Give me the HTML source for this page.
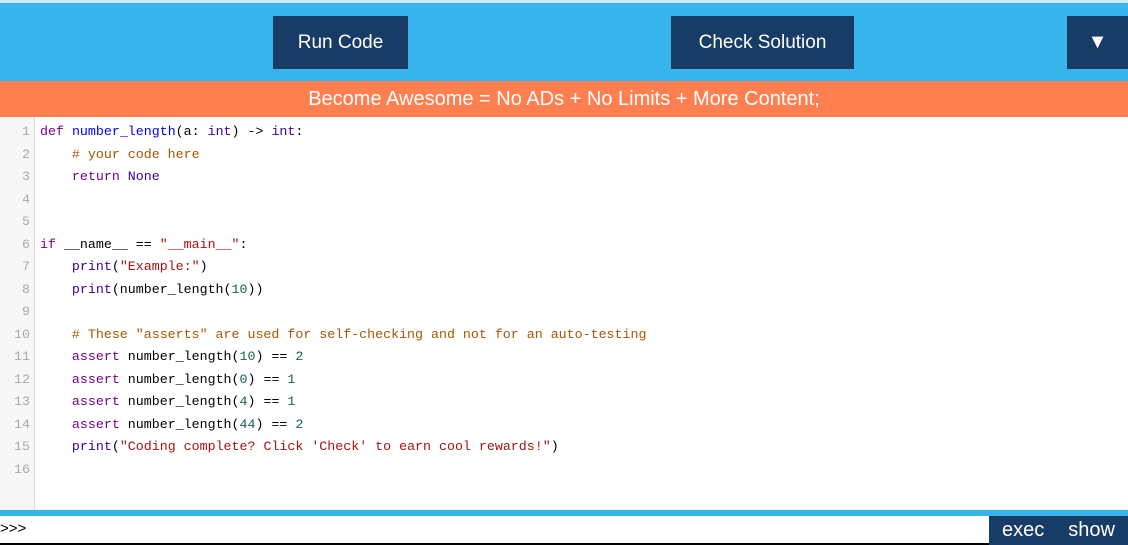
<!DOCTYPE html>
<html><head><style>
body{margin:0;width:1128px;height:545px;overflow:hidden;background:#fff;font-family:"Liberation Sans",sans-serif;position:relative}
.top{position:absolute;left:0;top:0;width:1128px;height:3px;background:#cde9f7}
.bar{position:absolute;left:0;top:3px;width:1128px;height:78px;background:#38b4ec}
.btn{position:absolute;background:#173c66;color:#fff;font-size:19px;display:flex;align-items:center;justify-content:center}
.orange{position:absolute;left:0;top:81px;width:1128px;height:36px;background:#ff7f50;color:#fff;font-size:20px;text-align:center;line-height:36px}
.gut{position:absolute;left:0;top:117px;width:34px;height:393px;background:#f7f7f7;border-right:1px solid #ddd}
.code{position:absolute;left:0;top:121px;font-family:"Liberation Mono",monospace;font-size:13.3px}
.l{height:22.5px;line-height:22.5px;white-space:pre;position:relative}
.n{display:inline-block;width:30px;text-align:right;color:#aaa;margin-right:10px}
.k{color:#708}.f{color:#00f}.v{color:#30a}.c{color:#a50}.s{color:#a11}.d{color:#164}
.bb{position:absolute;left:0;top:510px;width:1128px;height:6px;background:#38b4ec}
.inp{position:absolute;left:0;top:516px;width:990px;height:27px;border-bottom:2px solid #000;font-size:15px;line-height:26px}
.ex{position:absolute;top:516px;height:29px;background:#173c66;color:#fff;font-size:20px;line-height:28px}
</style></head><body>
<div class="top"></div><div class="bar"></div>
<div class="btn" style="left:273px;top:16px;width:135px;height:53px">Run Code</div>
<div class="btn" style="left:671px;top:16px;width:183px;height:53px">Check Solution</div>
<div class="btn" style="left:1067px;top:16px;width:61px;height:53px;font-size:20px">▼</div>
<div class="orange">Become Awesome = No ADs + No Limits + More Content;</div>
<div class="gut"></div>
<div class="code">
<div class="l"><span class="n">1</span><span class="k">def</span> <span class="f">number_length</span>(a: <span class="v">int</span>) -&gt; <span class="v">int</span>:</div>
<div class="l"><span class="n">2</span>    <span class="c"># your code here</span></div>
<div class="l"><span class="n">3</span>    <span class="k">return</span> <span class="v">None</span></div>
<div class="l"><span class="n">4</span></div>
<div class="l"><span class="n">5</span></div>
<div class="l"><span class="n">6</span><span class="k">if</span> __name__ == <span class="s">"__main__"</span>:</div>
<div class="l"><span class="n">7</span>    <span class="v">print</span>(<span class="s">"Example:"</span>)</div>
<div class="l"><span class="n">8</span>    <span class="v">print</span>(number_length(<span class="d">10</span>))</div>
<div class="l"><span class="n">9</span></div>
<div class="l"><span class="n">10</span>    <span class="c"># These "asserts" are used for self-checking and not for an auto-testing</span></div>
<div class="l"><span class="n">11</span>    <span class="k">assert</span> number_length(<span class="d">10</span>) == <span class="d">2</span></div>
<div class="l"><span class="n">12</span>    <span class="k">assert</span> number_length(<span class="d">0</span>) == <span class="d">1</span></div>
<div class="l"><span class="n">13</span>    <span class="k">assert</span> number_length(<span class="d">4</span>) == <span class="d">1</span></div>
<div class="l"><span class="n">14</span>    <span class="k">assert</span> number_length(<span class="d">44</span>) == <span class="d">2</span></div>
<div class="l"><span class="n">15</span>    <span class="v">print</span>(<span class="s">"Coding complete? Click 'Check' to earn cool rewards!"</span>)</div>
<div class="l"><span class="n">16</span></div>
</div>
<div class="bb"></div>
<div class="inp">&gt;&gt;&gt;</div>
<div class="ex" style="left:989px;width:139px"><span style="margin-left:13px">exec</span><span style="margin-left:24px">show</span></div>
</body></html>
